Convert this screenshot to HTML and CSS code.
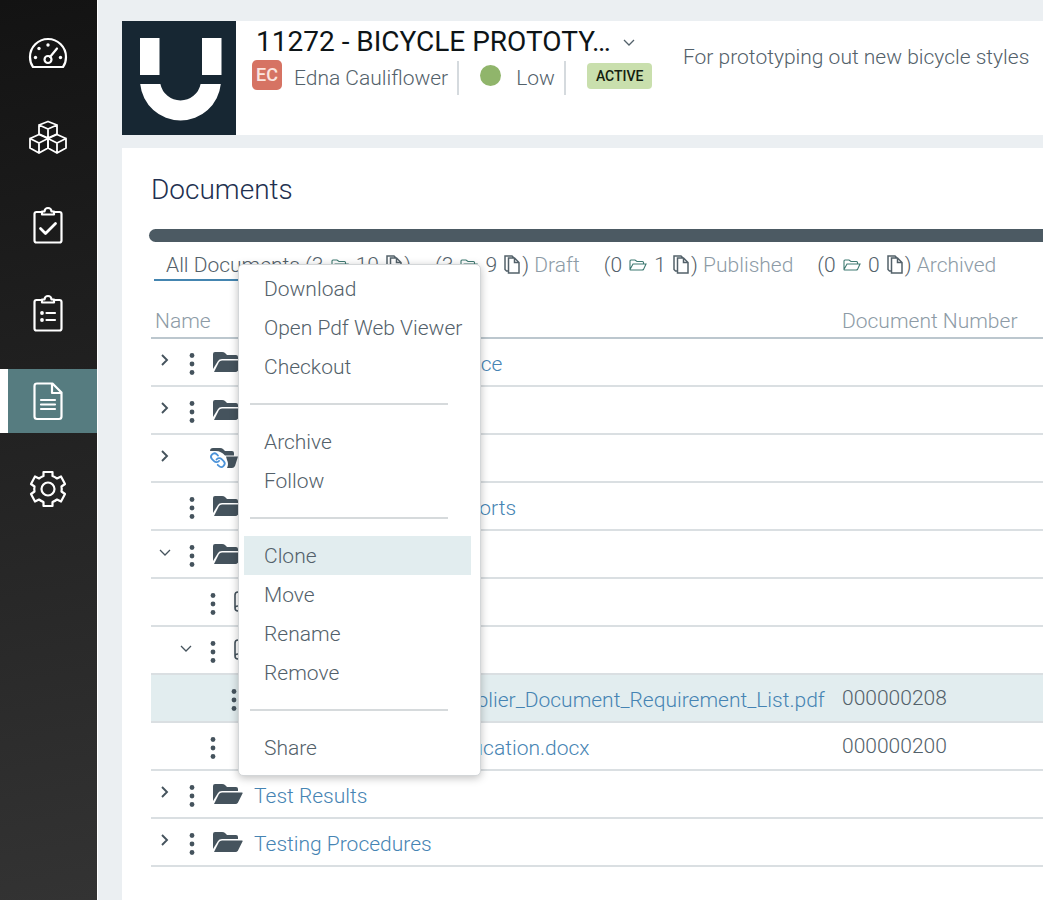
FILE: index.html
```
<!DOCTYPE html>
<html lang="en">
<head>
    <meta charset="UTF-8">
    <meta name="viewport" content="width=device-width, initial-scale=1.0">
    <title>Documents</title>
    <link rel="stylesheet" href="styles.css">
</head>
<body>
    <!-- Shared icons -->
    <svg class="sprite" aria-hidden="true">
        <symbol id="chevron-right" viewBox="0 0 12 14"><path d="M3 2l5 5-5 5" fill="none" stroke="currentColor" stroke-width="1.9"/></symbol>
        <symbol id="chevron-down" viewBox="0 0 12 14"><path d="M1 5l5 5 5-5" fill="none" stroke="currentColor" stroke-width="1.3"/></symbol>
        <symbol id="dots" viewBox="0 0 6 24"><circle cx="3" cy="3.500" r="2.400"/><circle cx="3" cy="12" r="2.400"/><circle cx="3" cy="20.500" r="2.400"/></symbol>
        <symbol id="folder" viewBox="0 0 30 20"><path d="M0 17V2Q0 0 2 0H9Q11 0 12 1L14 3H23Q25 3 25 5V7H9Q6 7 5 9Z"/><path d="M1 20L6 10Q7 8.500 9 8.500H29Q30 8.500 29.500 9.500L25 18.500Q24 20 22.500 20Z"/></symbol>
        <symbol id="folder-line" viewBox="0 0 18 12"><path d="M1 10.500V2Q1 1 2 1H6L8 2.500H13.500Q14.500 2.500 14.500 3.500V5M1 10.500L4 5H17L14.500 10.500Q14 11 13 11H1.500Q1 11 1 10.500Z" fill="none" stroke="currentColor" stroke-width="1.100"/></symbol>
        <symbol id="copy" viewBox="0 0 16 19"><path d="M4.500 3H10.500L15 7.500V18H4.500ZM10.500 3V7.500H15M4.500 16H2.500L1 14.500V1H8L10 3" fill="none" stroke="currentColor" stroke-width="1.500"/></symbol>
        <symbol id="book" viewBox="0 0 20 22"><path d="M4 1H18V20H4Q1 20 1 17V4Q1 1 4 1ZM1 17Q1 15 4 15H18" fill="none" stroke="currentColor" stroke-width="1.600"/></symbol>
    </svg>

    <div class="app">
        <nav class="sidebar">
            <a class="nav-item" href="#" aria-label="Dashboard">
                <svg viewBox="0 0 40 40"><path d="M5 38Q2 34 2 28A18 18 0 0 1 38 28Q38 34 35 38Z"/><circle cx="20" cy="30.500" r="3.500"/><path d="M22 28L29 19.500"/><g class="solid"><circle cx="7.500" cy="28.500" r="1.700"/><circle cx="11" cy="19.500" r="1.700"/><circle cx="20" cy="16" r="1.700"/><circle cx="32.500" cy="28.500" r="1.700"/></g></svg>
            </a>
            <a class="nav-item" href="#" aria-label="Products">
                <svg class="thin" viewBox="0 0 40 40"><path d="M20 4.500L29 8V17L20 21L11 17V8ZM11 8L20 12L29 8M20 12V21"/><path d="M11 17.500L20 21.500V31L11 36L2 31V21.500ZM2 21.500L11 26L20 21.500M11 26V36"/><path d="M29 17.500L38 21.500V31L29 36L20 31V21.500L29 26L38 21.500M29 26V36M20 21.500L29 17.500"/></svg>
            </a>
            <a class="nav-item" href="#" aria-label="Tasks">
                <svg viewBox="0 0 40 40"><path d="M14 7H8.500Q6.500 7 6.500 9V35.500Q6.500 37.500 8.500 37.500H31.500Q33.500 37.500 33.500 35.500V9Q33.500 7 31.500 7H26M14 6.500V9.500H26V6.500H23.500A3.500 3.500 0 1 0 16.500 6.500Z"/><path class="bold" d="M12.500 23.500L17.500 28.500L27.500 18.500"/></svg>
            </a>
            <a class="nav-item" href="#" aria-label="Requirements">
                <svg viewBox="0 0 40 40"><path d="M14 7H8.500Q6.500 7 6.500 9V35.500Q6.500 37.500 8.500 37.500H31.500Q33.500 37.500 33.500 35.500V9Q33.500 7 31.500 7H26M14 6.500V9.500H26V6.500H23.500A3.500 3.500 0 1 0 16.500 6.500Z"/><path d="M18.500 20H27M18.500 27H27"/><g class="solid"><circle cx="14" cy="20" r="1.900"/><circle cx="14" cy="27" r="1.900"/></g></svg>
            </a>
            <a class="nav-item active" href="#" aria-label="Documents">
                <svg viewBox="0 0 40 40"><path d="M24.500 2.500H9Q6.500 2.500 6.500 5V35.500Q6.500 38 9 38H31Q33.500 38 33.500 35.500V11.500ZM24 3V12H33"/><path d="M13 19H27M13 23.500H27M13 28H27"/></svg>
            </a>
            <a class="nav-item" href="#" aria-label="Settings">
                <svg viewBox="0 0 40 40"><circle cx="20" cy="20" r="6.500"/><path d="M15.500 3H24.500V7Q27 8 29 9.500L33 7.500L37 15L33.500 17.500Q34 20 33.500 22.500L37 25L33 32.500L29 30.500Q27 32 24.500 33V37H15.500V33Q13 32 11 30.500L7 32.500L3 25L6.500 22.500Q6 20 6.500 17.500L3 15L7 7.500L11 9.500Q13 8 15.500 7Z"/></svg>
            </a>
        </nav>

        <div class="content">
            <header class="project">
                <svg class="logo" viewBox="0 0 114 114" role="img" aria-label="Company logo">
                    <rect width="114" height="114" fill="#172733"/>
                    <path fill="#fff" d="M18 17H37.500V54H18ZM80 17H99.500V54H80ZM18.200 63H38.400A20.500 20.500 0 0 0 78.600 63H98.800A40.500 40.500 0 0 1 18.200 63Z"/>
                </svg>
                <div class="project-info">
                    <div class="title-row">
                        <h1>11272 - BICYCLE PROTOTY…</h1>
                        <button class="icon-btn" aria-label="Switch project"><svg class="chevron"><use href="#chevron-down"/></svg></button>
                    </div>
                    <div class="meta">
                        <span class="avatar">EC</span>
                        <span class="owner">Edna Cauliflower</span>
                        <span class="priority"><span class="dot"></span>Low</span>
                        <span class="badge">ACTIVE</span>
                    </div>
                </div>
                <p class="description">For prototyping out new bicycle styles</p>
            </header>

            <main class="panel">
                <h2>Documents</h2>
                <div class="bar"></div>
                <div class="tabs">
                    <a class="tab active" href="#">All Documents (3 <svg class="i-folder"><use href="#folder-line"/></svg> 10 <svg class="i-copy"><use href="#copy"/></svg>)</a>
                    <a class="tab" href="#">(3 <svg class="i-folder"><use href="#folder-line"/></svg> 9 <svg class="i-copy"><use href="#copy"/></svg>) <span>Draft</span></a>
                    <a class="tab" href="#">(0 <svg class="i-folder"><use href="#folder-line"/></svg> 1 <svg class="i-copy"><use href="#copy"/></svg>) <span>Published</span></a>
                    <a class="tab" href="#">(0 <svg class="i-folder"><use href="#folder-line"/></svg> 0 <svg class="i-copy"><use href="#copy"/></svg>) <span>Archived</span></a>
                </div>

                <table class="docs">
                    <thead>
                        <tr><th class="col-name">Name</th><th>Document Number</th></tr>
                    </thead>
                    <tbody>
                        <tr>
                            <td><div class="name">
                                <button class="toggle" aria-label="Expand"><svg class="chevron"><use href="#chevron-right"/></svg></button>
                                <button class="more" aria-label="Actions"><svg class="dots"><use href="#dots"/></svg></button>
                                <svg class="folder"><use href="#folder"/></svg>
                                <a href="#">Standards and Compliance</a>
                            </div></td><td></td>
                        </tr>
                        <tr>
                            <td><div class="name">
                                <button class="toggle" aria-label="Expand"><svg class="chevron"><use href="#chevron-right"/></svg></button>
                                <button class="more" aria-label="Actions"><svg class="dots"><use href="#dots"/></svg></button>
                                <svg class="folder"><use href="#folder"/></svg>
                                <a href="#">Engineering</a>
                            </div></td><td></td>
                        </tr>
                        <tr>
                            <td><div class="name">
                                <button class="toggle" aria-label="Expand"><svg class="chevron"><use href="#chevron-right"/></svg></button>
                                <span class="more"></span>
                                <svg class="folder" viewBox="0 0 30 20"><path d="M-3 3Q-3 0 0 0H7Q9 0 10 1L12 3H19Q21 3 21 5V7.500H12Q8 3 3 3Z"/><path d="M13 8.500H25L22 18Q21 20 19 20H14Q16 16 14 12Z"/><g class="link-mark" transform="translate(13 4) scale(-.68 .68)"><path d="M10 13a5 5 0 0 0 7.540.540l3-3a5 5 0 0 0-7.070-7.070l-1.720 1.710"/><path d="M14 11a5 5 0 0 0-7.540-.540l-3 3a5 5 0 0 0 7.070 7.070l1.710-1.710"/></g></svg>
                                <a href="#">Linked Folder</a>
                            </div></td><td></td>
                        </tr>
                        <tr>
                            <td><div class="name">
                                <span class="toggle"></span>
                                <button class="more" aria-label="Actions"><svg class="dots"><use href="#dots"/></svg></button>
                                <svg class="folder"><use href="#folder"/></svg>
                                <a href="#">Product and Testing Reports</a>
                            </div></td><td></td>
                        </tr>
                        <tr>
                            <td><div class="name">
                                <button class="toggle" aria-label="Collapse"><svg class="chevron"><use href="#chevron-down"/></svg></button>
                                <button class="more" aria-label="Actions"><svg class="dots"><use href="#dots"/></svg></button>
                                <svg class="folder"><use href="#folder"/></svg>
                                <a href="#">Specifications</a>
                            </div></td><td></td>
                        </tr>
                        <tr>
                            <td><div class="name level-1">
                                <span class="toggle"></span>
                                <button class="more" aria-label="Actions"><svg class="dots"><use href="#dots"/></svg></button>
                                <svg class="book"><use href="#book"/></svg>
                                <a href="#">Bicycle Frame</a>
                            </div></td><td></td>
                        </tr>
                        <tr>
                            <td><div class="name level-1">
                                <button class="toggle" aria-label="Collapse"><svg class="chevron"><use href="#chevron-down"/></svg></button>
                                <button class="more" aria-label="Actions"><svg class="dots"><use href="#dots"/></svg></button>
                                <svg class="book"><use href="#book"/></svg>
                                <a href="#">Supplier List</a>
                            </div></td><td></td>
                        </tr>
                        <tr class="selected">
                            <td><div class="name level-2">
                                <span class="toggle"></span>
                                <button class="more" aria-label="Actions"><svg class="dots"><use href="#dots"/></svg></button>
                                <span class="file-gap"></span>
                                <a href="#">Bicycle_Design_Supplier_Document_Requirement_List.pdf</a>
                            </div></td><td>000000208</td>
                        </tr>
                        <tr>
                            <td><div class="name level-1">
                                <span class="toggle"></span>
                                <button class="more" aria-label="Actions"><svg class="dots"><use href="#dots"/></svg></button>
                                <span class="file-gap"></span>
                                <a href="#">Product Bicycle Specification.docx</a>
                            </div></td><td>000000200</td>
                        </tr>
                        <tr>
                            <td><div class="name">
                                <button class="toggle" aria-label="Expand"><svg class="chevron"><use href="#chevron-right"/></svg></button>
                                <button class="more" aria-label="Actions"><svg class="dots"><use href="#dots"/></svg></button>
                                <svg class="folder"><use href="#folder"/></svg>
                                <a href="#">Test Results</a>
                            </div></td><td></td>
                        </tr>
                        <tr>
                            <td><div class="name">
                                <button class="toggle" aria-label="Expand"><svg class="chevron"><use href="#chevron-right"/></svg></button>
                                <button class="more" aria-label="Actions"><svg class="dots"><use href="#dots"/></svg></button>
                                <svg class="folder"><use href="#folder"/></svg>
                                <a href="#">Testing Procedures</a>
                            </div></td><td></td>
                        </tr>
                    </tbody>
                </table>

                <!-- Context menu -->
                <div class="menu" role="menu">
                    <button role="menuitem">Download</button>
                    <button role="menuitem">Open Pdf Web Viewer</button>
                    <button role="menuitem">Checkout</button>
                    <hr>
                    <button role="menuitem">Archive</button>
                    <button role="menuitem">Follow</button>
                    <hr>
                    <button role="menuitem" class="hover">Clone</button>
                    <button role="menuitem">Move</button>
                    <button role="menuitem">Rename</button>
                    <button role="menuitem">Remove</button>
                    <hr>
                    <button role="menuitem">Share</button>
                </div>
            </main>
        </div>
    </div>
</body>
</html>
```
FILE: styles.css
```
* {
    margin: 0;
    padding: 0;
    box-sizing: border-box;
}

body {
    font-family: Roboto, "Liberation Sans", sans-serif;
    font-size: 21px;
    font-weight: 300;
    line-height: 24px;
    color: #53616a;
    background: #ebeff2;
    overflow-x: hidden;
}

a {
    color: inherit;
    text-decoration: none;
}

button {
    font: inherit;
    color: inherit;
    background: none;
    border: 0;
    cursor: pointer;
}

svg {
    display: block;
    flex: none;
    fill: currentColor;
}

.sprite {
    position: absolute;
    width: 0;
    height: 0;
}

.app {
    display: flex;
    min-height: 100vh;
}

/* Sidebar */
.sidebar {
    flex: none;
    width: 98px;
    padding-top: 17px;
    display: flex;
    flex-direction: column;
    gap: 24px;
    background: linear-gradient(170deg, #131313, #333);
    border-right: 1px solid #fff;
}

.nav-item {
    height: 64px;
    padding-right: 1px;
    display: flex;
    align-items: center;
    justify-content: center;
    color: #fff;
}

.nav-item.active {
    background: linear-gradient(90deg, #fff 8px, #567c80 8px);
}

.nav-item svg {
    width: 40px;
    height: 40px;
    fill: none;
    stroke: #fff;
    stroke-width: 2.2;
    stroke-linecap: round;
    stroke-linejoin: round;
}

.nav-item .thin {
    stroke-width: 1.8;
}

.nav-item .bold {
    stroke-width: 2.8;
}

.nav-item .solid {
    fill: #fff;
    stroke: none;
}

.content {
    flex: 1;
    min-width: 0;
    padding: 21px 0 0 24px;
    display: flex;
    flex-direction: column;
    gap: 13px;
}

/* Project header */
.project {
    display: flex;
    background: #fff;
}

.logo {
    width: 114px;
    height: 114px;
}

.project-info {
    flex: none;
    width: 447px;
    padding: 4px 0 0 16px;
}

.title-row {
    display: flex;
    align-items: center;
    gap: 12px;
    padding-left: 4px;
}

h1 {
    font-size: 28px;
    font-weight: 400;
    line-height: 34px;
    color: #0d1417;
    white-space: nowrap;
}

.chevron {
    width: 12px;
    height: 14px;
}

.meta {
    display: flex;
    align-items: center;
    height: 34px;
    margin-top: 2px;
}

.avatar {
    width: 30px;
    height: 30px;
    margin: 0 12px 6px 0;
    border-radius: 5px;
    background: #d67363;
    color: #fbe5e0;
    font-size: 18px;
    font-weight: 500;
    line-height: 30px;
    text-align: center;
}

.owner,
.priority {
    height: 34px;
    padding-right: 9px;
    border-right: 2px solid #d5dade;
    line-height: 34px;
    white-space: nowrap;
}

.priority {
    display: flex;
    padding-left: 21px;
}

.dot {
    width: 21px;
    height: 21px;
    margin: 4px 15px 0 0;
    border-radius: 50%;
    background: #90b56b;
}

.badge {
    height: 26px;
    margin: 0 0 4px 21px;
    padding: 0 9px;
    border-radius: 4px;
    background: #c9dfad;
    color: #14200f;
    font-size: 14px;
    font-weight: 500;
    line-height: 26px;
}

.description {
    padding-top: 24px;
    white-space: nowrap;
}

/* Documents */
.panel {
    position: relative;
    flex: 1;
    padding: 24px 0 0 29px;
    background: #fff;
}

h2 {
    font-size: 28px;
    font-weight: 300;
    line-height: 36px;
    color: #22304f;
}

.bar {
    height: 13px;
    margin: 21px 0 0 -2px;
    border-radius: 7px 0 0 7px;
    background: #4c5a63;
}

.tabs {
    display: flex;
    padding-left: 3px;
}

.tab {
    display: flex;
    align-items: center;
    height: 39px;
    padding: 8px 12px 0;
    border-bottom: 2px solid transparent;
    white-space: pre;
}

.tab.active {
    border-color: #4485b0;
}

.tab span {
    color: #8d9ba6;
}

.i-folder {
    width: 18px;
    height: 12px;
    margin: 0 2px;
    color: #3f7a72;
}

.i-copy {
    width: 16px;
    height: 19px;
    margin: 0 2px;
}

.docs {
    width: 100%;
    border-collapse: collapse;
    table-layout: fixed;
}

.docs th {
    height: 57px;
    padding: 23px 0 0 4px;
    border-bottom: 2px solid #bcc7ce;
    color: #8d9ba6;
    font-weight: 300;
    text-align: left;
    white-space: nowrap;
}

.col-name {
    width: 687px;
}

.docs td {
    height: 48px;
    padding-left: 4px;
    border-bottom: 2px solid #dadfe2;
}

.selected {
    background: #e2edef;
}

.name {
    display: flex;
    align-items: center;
    color: #45535d;
}

.name a {
    padding-top: 3px;
    color: #4684b3;
    white-space: nowrap;
}

.level-1 {
    padding-left: 21px;
}

.level-2 {
    padding-left: 42px;
}

.toggle {
    width: 20px;
    height: 18px;
    padding: 0 4px;
    margin: 0 4px 4px 0;
}

.more {
    width: 26px;
    padding: 4px 10px 0;
    margin-right: 8px;
}

.dots {
    width: 6px;
    height: 24px;
}

.folder {
    width: 30px;
    height: 20px;
    margin-right: 11px;
    overflow: visible;
}

.link-mark {
    fill: none;
    stroke: #4c93d9;
    stroke-width: 2.6;
    stroke-linecap: round;
}

.book {
    width: 20px;
    height: 22px;
    margin-right: 20px;
}

.file-gap {
    width: 40px;
}

/* Context menu */
.menu {
    position: absolute;
    top: 116px;
    left: 116px;
    width: 243px;
    padding: 4px 9px 8px 5px;
    border: 1px solid #d3d6d8;
    border-radius: 5px;
    background: #fff;
    box-shadow: 0 2px 8px rgba(0, 0, 0, 0.25);
}

.menu button {
    display: block;
    width: 100%;
    height: 39px;
    padding-left: 20px;
    text-align: left;
}

.menu .hover {
    background: #e2edef;
}

.menu hr {
    height: 2px;
    margin: 17px 23px 17px 6px;
    border: 0;
    background: #d6dadc;
}
```
